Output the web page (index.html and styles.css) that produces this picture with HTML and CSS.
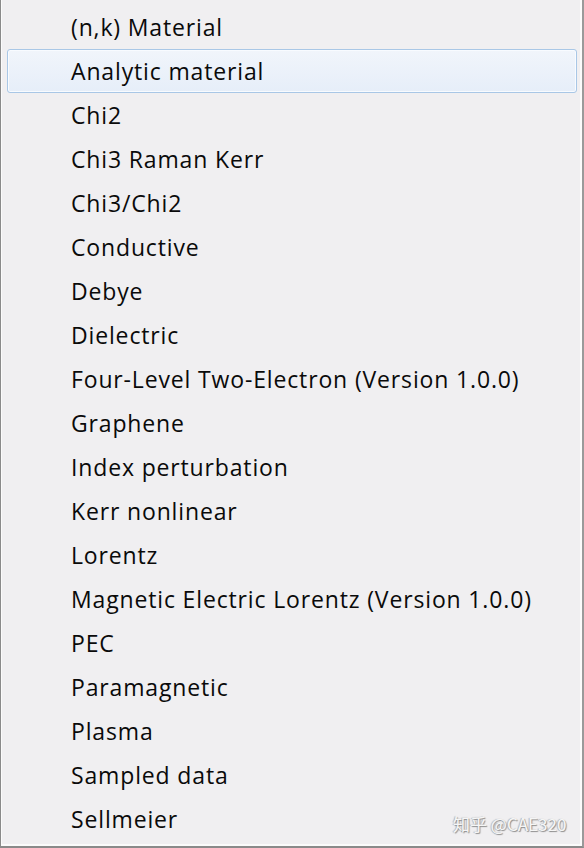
FILE: index.html
```html
<!DOCTYPE html>
<html>
<head>
<meta charset="utf-8">
<link rel="stylesheet" href="styles.css">
</head>
<body>
<div class="menu">
  <ul class="list">
    <li class="item">(n,k) Material</li>
    <li class="item active">Analytic material</li>
    <li class="item">Chi2</li>
    <li class="item">Chi3 Raman Kerr</li>
    <li class="item">Chi3/Chi2</li>
    <li class="item">Conductive</li>
    <li class="item">Debye</li>
    <li class="item">Dielectric</li>
    <li class="item">Four-Level Two-Electron (Version 1.0.0)</li>
    <li class="item">Graphene</li>
    <li class="item">Index perturbation</li>
    <li class="item">Kerr nonlinear</li>
    <li class="item">Lorentz</li>
    <li class="item">Magnetic Electric Lorentz (Version 1.0.0)</li>
    <li class="item">PEC</li>
    <li class="item">Paramagnetic</li>
    <li class="item">Plasma</li>
    <li class="item">Sampled data</li>
    <li class="item">Sellmeier</li>
  </ul>
  <div class="watermark">知乎 @CAE320</div>
</div>
</body>
</html>
```

FILE: styles.css
```css
html, body {
  margin: 0;
  padding: 0;
  background: #f0eff1;
}
.menu {
  position: relative;
  width: 584px;
  height: 848px;
  box-sizing: border-box;
  background: #f0eff1;
  border-left: 1px solid #8a8a8a;
  border-right: 2px solid #9a9a9a;
  border-bottom: 2px solid #8a8a8a;
  box-shadow: inset 1px 0 0 #fbfbfb, inset -2px -2px 0 #fbfbfb;
  overflow: hidden;
}
.list {
  list-style: none;
  margin: 0;
  padding: 5px 0 0 6px;
}
.item {
  height: 44px;
  width: 570px;
  box-sizing: border-box;
  padding-left: 63px;
  display: flex;
  align-items: center;
  font-family: "Open Sans", "Noto Sans", sans-serif;
  font-size: 23px;
  letter-spacing: 0.85px;
  color: #0a0a0a;
  border: 1px solid transparent;
  border-radius: 3px;
}
.item.active {
  border-color: #a9c7e6;
  background: linear-gradient(#f1f5fb, #e6eef9);
  box-shadow: inset 0 0 0 1px #f8fbff;
}
.watermark {
  position: absolute;
  left: 452px;
  top: 811px;
  font-family: "Noto Sans CJK SC", "Liberation Sans", sans-serif;
  font-size: 17px;
  color: #f6f6f6;
  text-shadow: 1px 1px 1px #8c8c8c, -1px 0 1px #b0b0b0;
}
```
